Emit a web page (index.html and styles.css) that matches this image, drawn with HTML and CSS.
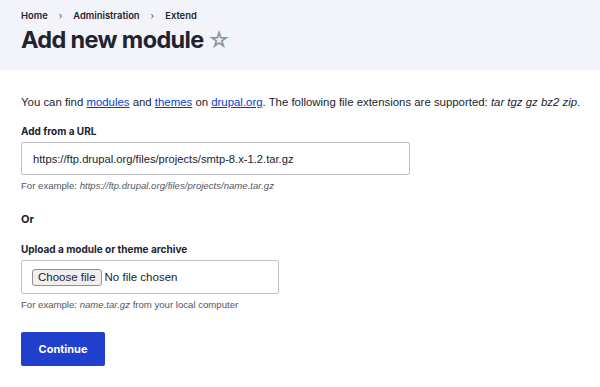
FILE: index.html
```html
<!DOCTYPE html>
<html>
<head>
<meta charset="utf-8">
<link rel="stylesheet" href="styles.css">
</head>
<body>
<header class="page-header">
  <nav class="breadcrumb">
    <span class="crumb">Home</span><span class="sep">›</span><span class="crumb">Administration</span><span class="sep">›</span><span class="crumb">Extend</span>
  </nav>
  <h1 class="title">Add new module <span class="star">☆</span></h1>
</header>
<main class="content">
  <p class="intro">You can find <a href="#">modules</a> and <a href="#">themes</a> on <a href="#">drupal.org</a>. The following file extensions are supported: <em>tar tgz gz bz2 zip</em>.</p>
  <div class="field">
    <label class="label">Add from a URL</label>
    <div class="url-input">https://ftp.drupal.org/files/projects/smtp-8.x-1.2.tar.gz</div>
    <div class="desc">For example: <em>https://ftp.drupal.org/files/projects/name.tar.gz</em></div>
  </div>
  <div class="or">Or</div>
  <div class="field field-upload">
    <label class="label">Upload a module or theme archive</label>
    <div class="file-input"><span class="choose">Choose file</span><span class="nofile">No file chosen</span></div>
    <div class="desc">For example: <em>name.tar.gz</em> from your local computer</div>
  </div>
  <button class="continue">Continue</button>
</main>
</body>
</html>
```
FILE: styles.css
```css
html, body { margin: 0; padding: 0; background: #fff; }
body { font-family: Inter, "Liberation Sans", sans-serif; color: #222330; width: 600px; height: 387px; overflow: hidden; }
.page-header { background: #f3f4f9; height: 70px; padding: 10px 21px 0; box-sizing: border-box; }
.breadcrumb { font-size: 9.4px; font-weight: 600; line-height: 12px; color: #222330; display: flex; align-items: center; }
.sep { margin: 0 11px; font-weight: 400; color: #555; }
.title { margin: 3px 0 0; font-size: 23.5px; line-height: 30px; font-weight: 700; letter-spacing: -0.65px; color: #222330; }
.star { font-weight: 400; color: #8e929c; font-size: 22px; margin-left: -1px; letter-spacing: 0; }
.content { padding: 0 21px; }
.intro { font-family: "Liberation Sans", sans-serif; font-size: 11.4px; margin: 24px 0 0; line-height: 16px; white-space: nowrap; }
.intro a { color: #003ecc; text-decoration: underline; }
.field { margin-top: 15px; }
.field-upload { margin-top: 17px; }
.label { display: block; font-size: 10px; font-weight: 700; line-height: 13px; }
.url-input { margin-top: 4px; width: 389px; height: 33px; box-sizing: border-box; border: 1px solid #c0c0c6; border-radius: 2px; padding: 0 11px; display: flex; align-items: center; font-family: "Liberation Sans", sans-serif; font-size: 11.2px; }
.desc { margin-top: 5px; font-family: "Liberation Sans", sans-serif; font-size: 9.6px; color: #545560; line-height: 11px; }
.or { margin-top: 21px; font-size: 11px; font-weight: 700; }
.file-input { margin-top: 4px; width: 258px; height: 34px; box-sizing: border-box; border: 1px solid #c0c0c6; border-radius: 2px; padding: 0 10px; display: flex; align-items: center; font-family: "Liberation Sans", sans-serif; font-size: 11.5px; }
.choose { background: #efefef; border: 1px solid #8f8f9d; border-radius: 3px; height: 17px; padding: 0 5px; display: flex; align-items: center; margin-right: 3px; box-sizing: border-box; }
.continue { display: block; margin-top: 22px; width: 84px; height: 34px; background: #1f3fcc; color: #fff; border: 0; border-radius: 2px; font-family: Inter, "Liberation Sans", sans-serif; font-weight: 700; font-size: 11px; }
```
